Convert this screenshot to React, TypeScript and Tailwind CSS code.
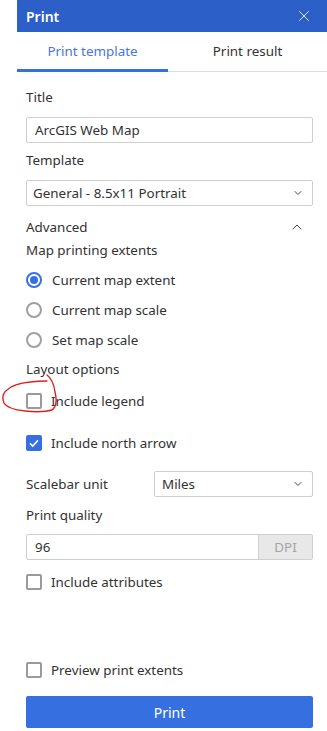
import React from 'react';
import { X, ChevronDown, ChevronUp } from 'lucide-react';

const font = { fontFamily: '"Noto Sans", "Open Sans", Arial, sans-serif' };

function Radio({ checked, label }: { checked?: boolean; label: string }) {
  return (
    <div className="flex items-center h-[30px] gap-[10px]">
      <span
        className={
          'w-[16px] h-[16px] rounded-full border-2 flex items-center justify-center ' +
          (checked ? 'border-[#3670e0]' : 'border-[#a0a0a0]')
        }
      >
        {checked && <span className="w-[8px] h-[8px] rounded-full bg-[#3670e0]" />}
      </span>
      <span>{label}</span>
    </div>
  );
}

function Check({ checked, label }: { checked?: boolean; label: string }) {
  return (
    <div className="flex items-center h-[30px] gap-[9px]">
      <span
        className={
          'w-[16px] h-[16px] rounded-[2px] flex items-center justify-center ' +
          (checked ? 'bg-[#3670e0]' : 'border-2 border-[#9a9a9a]')
        }
      >
        {checked && (
          <svg width="12" height="12" viewBox="0 0 12 12" fill="none">
            <path d="M2 6.3 4.8 9 10 3.2" stroke="white" strokeWidth="1.6" />
          </svg>
        )}
      </span>
      <span>{label}</span>
    </div>
  );
}

export default function App() {
  return (
    <div className="relative w-[327px] h-[731px] bg-white flex text-[13.4px] text-[#323232]" style={font}>
      <div className="w-[17px] shrink-0" />
      <div className="flex-1 flex flex-col">
        <div className="h-[32px] bg-[#2d5fc8] flex items-center justify-between pl-[9px] pr-[14px]">
          <span className="text-white font-semibold text-[14px]">Print</span>
          <X className="w-[18px] h-[18px] text-white" strokeWidth={1.1} />
        </div>
        <div className="h-[40px] flex border-b border-[#dcdcdc]">
          <div className="w-[151px] flex items-center justify-center text-[#4a74df] border-b-[3px] border-[#3670e0] -mb-px pt-[2px]">
            Print template
          </div>
          <div className="flex-1 flex items-center justify-center text-[#323232]">Print result</div>
        </div>

        <div className="flex flex-col flex-1 pl-[9px] pr-[14px]">
          <div className="mt-[15px] h-[20px] leading-[20px]">Title</div>
          <div className="mt-[10px] h-[26px] border border-[#cfcfcf] rounded-[2px] flex items-center pl-[8px]">
            ArcGIS Web Map
          </div>
          <div className="mt-[7px] h-[20px] leading-[20px]">Template</div>
          <div className="mt-[10px] h-[26px] border border-[#cfcfcf] rounded-[2px] flex items-center justify-between pl-[6px] pr-[8px]">
            <span>General - 8.5x11 Portrait</span>
            <ChevronDown className="w-[12px] h-[12px] text-[#444]" strokeWidth={2} />
          </div>
          <div className="mt-[11px] h-[20px] flex items-center justify-between pr-[8px]">
            <span>Advanced</span>
            <ChevronUp className="w-[16px] h-[16px] text-[#444]" strokeWidth={1.5} />
          </div>
          <div className="mt-[3px] h-[20px] leading-[20px]">Map printing extents</div>
          <div className="mt-[5px] flex flex-col">
            <Radio checked label="Current map extent" />
            <Radio label="Current map scale" />
            <Radio label="Set map scale" />
          </div>
          <div className="mt-[4px] h-[20px] leading-[20px]">Layout options</div>
          <div className="mt-[7px]">
            <Check label="Include legend" />
          </div>
          <div className="mt-[12px]">
            <Check checked label="Include north arrow" />
          </div>
          <div className="mt-[13px] h-[26px] flex items-center">
            <span className="w-[128px]">Scalebar unit</span>
            <div className="flex-1 h-[26px] border border-[#cfcfcf] rounded-[2px] flex items-center justify-between pl-[7px] pr-[8px]">
              <span>Miles</span>
              <ChevronDown className="w-[12px] h-[12px] text-[#444]" strokeWidth={2} />
            </div>
          </div>
          <div className="mt-[8px] h-[20px] leading-[20px]">Print quality</div>
          <div className="mt-[9px] h-[26px] flex border border-[#cfcfcf] rounded-[2px]">
            <div className="flex-1 flex items-center pl-[8px]">96</div>
            <div className="w-[54px] bg-[#e8e8e8] border-l border-[#cfcfcf] flex items-center justify-center text-[#a5a5a5]">
              DPI
            </div>
          </div>
          <div className="mt-[7px]">
            <Check label="Include attributes" />
          </div>
          <div className="mt-[58px]">
            <Check label="Preview print extents" />
          </div>
          <button className="mt-[11px] h-[32px] bg-[#3670e0] rounded-[2px] text-white text-[14px]">Print</button>
        </div>
      </div>

      <svg className="absolute inset-0 pointer-events-none" width="327" height="731" viewBox="0 0 327 731" fill="none">
        <path
          d="M47 375 C51 378 54 384 55 392 C57 400 56 407 52 410 C45 412 35 412 25 411 C15 410 7 408 4 403 C2 398 3 393 7 390 C12 385 20 383 30 382 C38 381 44 381 47 381"
          stroke="#e0201c"
          strokeWidth="1.4"
          strokeLinecap="round"
        />
      </svg>
    </div>
  );
}
